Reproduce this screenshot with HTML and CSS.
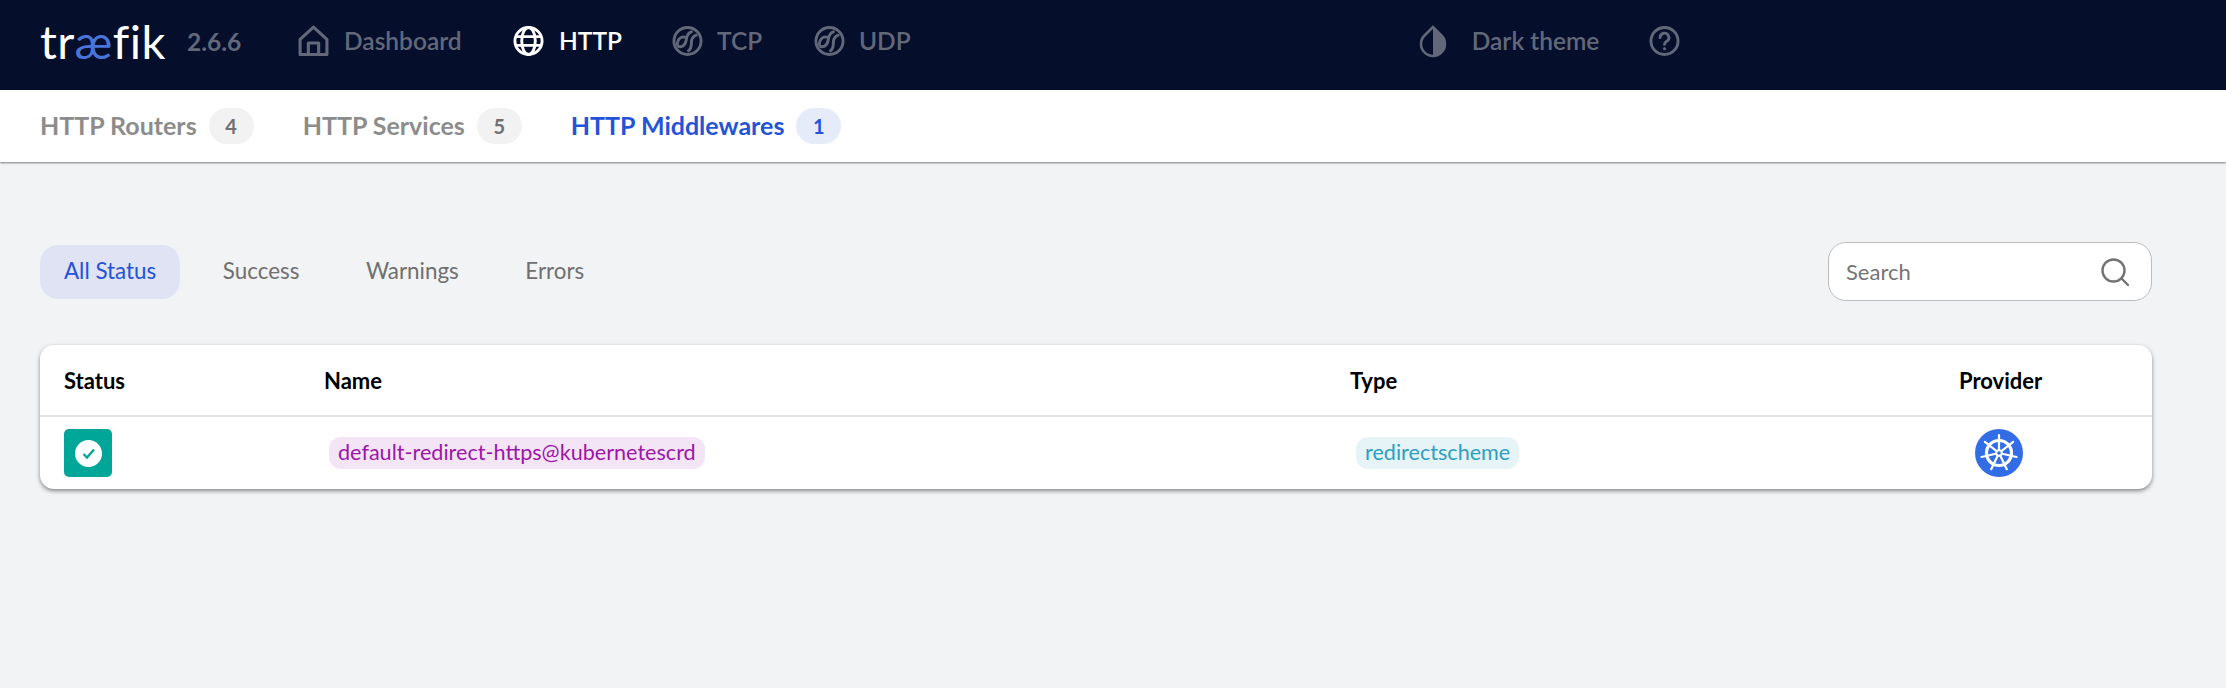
FILE: index.html
```html
<!DOCTYPE html>
<html lang="en">
<head>
<meta charset="utf-8">
<title>Traefik</title>
<link rel="stylesheet" href="styles.css">
</head>
<body>
<header class="topbar">
  <div class="logo">tr<span class="logo-ae">æ</span>fik</div>
  <div class="version">2.6.6</div>
  <nav class="mainnav">
    <a class="navitem nav-dash">
      <svg class="navicon" viewBox="0 0 30 30" fill="none" stroke="currentColor" stroke-width="3" stroke-linejoin="round"><path d="M2 13.500 15 1.500l13 12V28H2z"/><path d="M10 28V17h10v11"/></svg>
      <span>Dashboard</span>
    </a>
    <a class="navitem nav-http active">
      <svg class="navicon" viewBox="0 0 32 32" fill="none" stroke="currentColor" stroke-width="3"><circle cx="16" cy="16" r="14"/><ellipse cx="16" cy="16" rx="7" ry="14"/><path d="M3 11.500h26M3 20.500h26"/></svg>
      <span>HTTP</span>
    </a>
    <a class="navitem nav-tcp">
      <svg class="navicon" viewBox="0 0 32 32" fill="none" stroke="currentColor" stroke-width="3" stroke-linecap="round"><circle cx="16" cy="16" r="14"/><path d="M20 6.500c-3 1-4.500 3.500-5 7-.5 4-1.500 8-6.500 8.500-3 .2-3.500-3-2.500-5.500 1-3 4-5 7-4.500"/><path d="M25 10c-3 1-5 4-5 8 0 3 0 6-3 8"/></svg>
      <span>TCP</span>
    </a>
    <a class="navitem nav-udp">
      <svg class="navicon" viewBox="0 0 32 32" fill="none" stroke="currentColor" stroke-width="3" stroke-linecap="round"><circle cx="16" cy="16" r="14"/><path d="M20 6.500c-3 1-4.500 3.500-5 7-.5 4-1.500 8-6.500 8.500-3 .2-3.500-3-2.500-5.500 1-3 4-5 7-4.500"/><path d="M25 10c-3 1-5 4-5 8 0 3 0 6-3 8"/></svg>
      <span>UDP</span>
    </a>
  </nav>
  <div class="tools">
    <a class="navitem nav-theme">
      <svg class="dropicon" viewBox="0.500 0 27 33"><path d="M14 2 5.500 10.500a12 12 0 1 0 17 0z" fill="none" stroke="currentColor" stroke-width="2.500"/><path d="M14 2l8.500 8.500A12 12 0 0 1 14 31.500z" fill="currentColor"/></svg>
      <span>Dark theme</span>
    </a>
    <svg class="navicon helpicon" viewBox="0 0 32 32" fill="none" stroke="currentColor" stroke-width="3" stroke-linecap="round"><circle cx="16" cy="16" r="14"/><path d="M11.500 12.500a4.500 4.500 0 1 1 6.800 3.800c-1.500 1-2.300 1.700-2.300 3.200"/><circle cx="16" cy="24" r="1.200" fill="currentColor" stroke-width="1"/></svg>
  </div>
</header>

<div class="subnav">
  <a class="subtab">HTTP Routers<span class="count">4</span></a>
  <a class="subtab">HTTP Services<span class="count">5</span></a>
  <a class="subtab current">HTTP Middlewares<span class="count">1</span></a>
</div>

<main class="content">
  <div class="toolbar">
    <div class="filters">
      <a class="filter selected">All Status</a>
      <a class="filter">Success</a>
      <a class="filter">Warnings</a>
      <a class="filter">Errors</a>
    </div>
    <label class="search">
      <input class="search-input" type="text" placeholder="Search">
      <svg class="search-icon" viewBox="0 0 28 28" fill="none" stroke="currentColor" stroke-width="2.400" stroke-linecap="round"><circle cx="12.500" cy="12.500" r="11"/><path d="M20.500 20.500 27 27"/></svg>
    </label>
  </div>

  <section class="card">
    <div class="row head">
      <div>Status</div>
      <div>Name</div>
      <div>Type</div>
      <div>Provider</div>
    </div>
    <div class="row body">
      <div>
        <span class="status">
          <svg viewBox="0 0 27 27"><circle cx="13.500" cy="13.500" r="13.500" fill="#fff"/><path d="M8.500 14l3.500 3.500 7-8" fill="none" stroke="#00a697" stroke-width="2.300"/></svg>
        </span>
      </div>
      <div><span class="chip chip-name">default-redirect-https@kubernetescrd</span></div>
      <div><span class="chip chip-type">redirectscheme</span></div>
      <div class="provider-cell">
        <svg class="provider" viewBox="0 0 48 48">
          <circle cx="24" cy="24" r="24" fill="#326de6"/>
          <g fill="none" stroke="#fff">
            <circle cx="24" cy="24" r="12.500" stroke-width="3.200"/>
            <g stroke-width="2.200" stroke-linecap="round">
              <path d="M24 24V6"/><path d="M24 24 38.100 12.800"/><path d="M24 24 41.500 28"/><path d="M24 24 31.800 40.200"/><path d="M24 24 16.200 40.200"/><path d="M24 24 6.500 28"/><path d="M24 24 9.900 12.800"/>
            </g>
          </g>
          <circle cx="24" cy="24" r="3.800" fill="#fff"/>
          <circle cx="24" cy="24" r="1.800" fill="#326de6"/>
        </svg>
      </div>
    </div>
  </section>
</main>
</body>
</html>
```

FILE: styles.css
```css
* { box-sizing: border-box; }

html, body { height: 100%; }

body {
  margin: 0;
  background: #f2f3f5;
  font-family: "Lato", "Open Sans", sans-serif;
  overflow: hidden;
}

.topbar {
  height: 90px;
  background: #050f2c;
  color: #626879;
  display: flex;
  align-items: center;
  padding: 0 0 8px 40px;
}

.logo {
  width: 126px;
  color: #fff;
  font-size: 47px;
  font-weight: 400;
  line-height: 50px;
  letter-spacing: 0.5px;
  white-space: nowrap;
}

.logo-ae { color: #4a75d8; }

.version {
  margin-left: 21px;
  width: 54px;
  font-size: 24.500px;
  font-weight: 700;
}

.mainnav { display: flex; margin-left: 57px; }

.navitem {
  display: flex;
  align-items: center;
  gap: 15px;
  font-size: 24.500px;
  font-weight: 600;
  line-height: 32px;
}

.navicon { width: 31px; height: 32px; flex: none; }

.nav-dash { width: 215px; }
.nav-http { width: 159px; color: #fff; }
.nav-tcp { width: 142px; gap: 14px; }
.nav-udp { gap: 14px; }

.tools {
  display: flex;
  align-items: center;
  margin-left: 508px;
}

.dropicon { width: 28px; height: 33px; flex: none; }
.nav-theme { gap: 25px; width: 230px; }

.subnav {
  height: 72px;
  background: #fff;
  box-shadow: 0 1px 2px rgba(0, 0, 0, 0.5);
  display: flex;
  align-items: center;
  padding: 0 0 2px 40px;
  position: relative;
}

.subtab {
  display: flex;
  align-items: center;
  gap: 12px;
  margin-right: 49px;
  color: #8c8c8c;
  font-size: 25px;
  font-weight: 700;
}

.count {
  width: 45px;
  height: 36px;
  margin-top: 2px;
  border-radius: 18px;
  background: #f2f2f2;
  color: #707070;
  font-size: 20px;
  display: flex;
  align-items: center;
  justify-content: center;
}

.current { color: #2453d8; }
.current .count { background: #e6ebfa; color: #2453d8; }

.content { padding: 80px 74px 0 40px; }

.toolbar {
  display: flex;
  justify-content: space-between;
  align-items: center;
  height: 59px;
}

.filters { display: flex; gap: 18.500px; }

.filter {
  height: 54px;
  padding: 0 24px 2px;
  border-radius: 18px;
  display: flex;
  align-items: center;
  color: #6f6f6f;
  font-size: 22.400px;
}

.selected { background: #dfe3f3; color: #2453d8; }

.search {
  width: 324px;
  height: 59px;
  border: 1px solid #bdbdbd;
  border-radius: 18px;
  background: #fff;
  display: flex;
  align-items: center;
  padding: 0 22px 0 17px;
}

.search-input {
  flex: 1;
  min-width: 0;
  border: 0;
  outline: 0;
  background: transparent;
  padding: 0;
  font: 400 22px "Lato", sans-serif;
  color: #6f6f6f;
}

.search-input::placeholder { color: #757575; opacity: 1; }

.search-icon { width: 28px; height: 28px; color: #737373; flex: none; }

.card {
  margin-top: 44px;
  background: #fff;
  border-radius: 14px;
  box-shadow: 0 2px 4px rgba(0, 0, 0, 0.45);
}

.row {
  display: grid;
  grid-template-columns: 260px 1026px 609px 1fr;
  padding: 0 24px;
}

.head {
  height: 72px;
  align-items: center;
  border-bottom: 2px solid #e3e3e3;
  color: #000;
  font-size: 22px;
  font-weight: 700;
}

.body { height: 72px; align-items: center; }

.status {
  width: 48px;
  height: 48px;
  border-radius: 5px;
  background: #00a697;
  display: flex;
  align-items: center;
  justify-content: center;
}

.status svg { width: 27px; height: 27px; }

.chip {
  display: inline-block;
  height: 32px;
  line-height: 31px;
  border-radius: 12px;
  padding: 0 9px;
  font-size: 21.600px;
}

.chip-name { margin-left: 5px; background: #f4e5f6; color: #9c16a8; }
.chip-type { margin-left: 6px; background: #e6f4f8; color: #2d9fc0; }

.provider-cell { display: flex; padding-left: 16px; }
.provider { width: 48px; height: 48px; }
```
